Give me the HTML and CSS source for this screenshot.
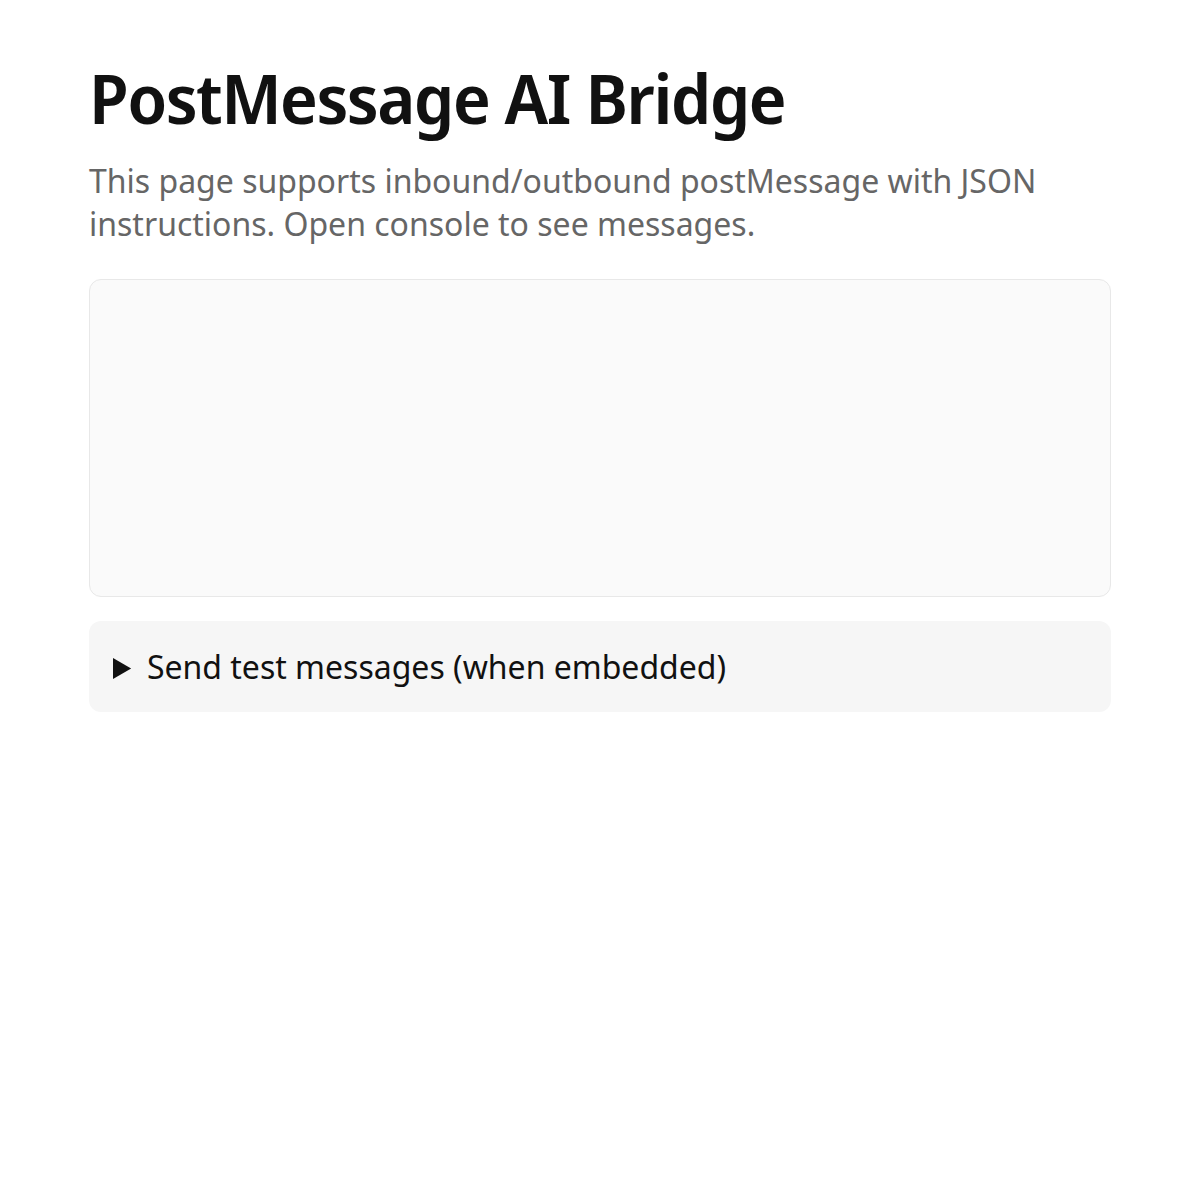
FILE: index.html
```html
<!DOCTYPE html>
<html lang="en">
<head>
<meta charset="utf-8">
<title>PostMessage AI Bridge</title>
<link rel="stylesheet" href="styles.css">
</head>
<body>
<main class="page">
  <h1 class="title">PostMessage AI Bridge</h1>
  <p class="intro">This page supports inbound/outbound postMessage with JSON instructions. Open console to see messages.</p>
  <div class="output"></div>
  <details class="tests">
    <summary class="tests-summary">Send test messages (when embedded)</summary>
  </details>
</main>
</body>
</html>
```

FILE: styles.css
```css
html, body {
  margin: 0;
  padding: 0;
  background: #ffffff;
}
body {
  font-family: "Noto Sans", "DejaVu Sans", sans-serif;
  color: #111111;
}
.page {
  padding: 57px 89px;
  display: flex;
  flex-direction: column;
}
.title {
  margin: 0;
  font-family: "Noto Sans Display", "Noto Sans", "DejaVu Sans", sans-serif;
  font-size: 68px;
  font-weight: 600;
  line-height: 81.6px;
  letter-spacing: -0.02em;
  color: #111111;
}
.intro {
  margin: 20px 0 0;
  font-size: 32px;
  line-height: 43px;
  color: #666666;
}
.output {
  margin-top: 34px;
  height: 316px;
  border: 1px solid #e8e8e8;
  border-radius: 12px;
  background: #fafafa;
}
.tests {
  margin-top: 24px;
  background: #f6f6f6;
  border-radius: 12px;
  padding: 24px 24px;
}
.tests-summary {
  font-size: 32px;
  line-height: 43px;
  cursor: pointer;
  color: #111111;
}
```
